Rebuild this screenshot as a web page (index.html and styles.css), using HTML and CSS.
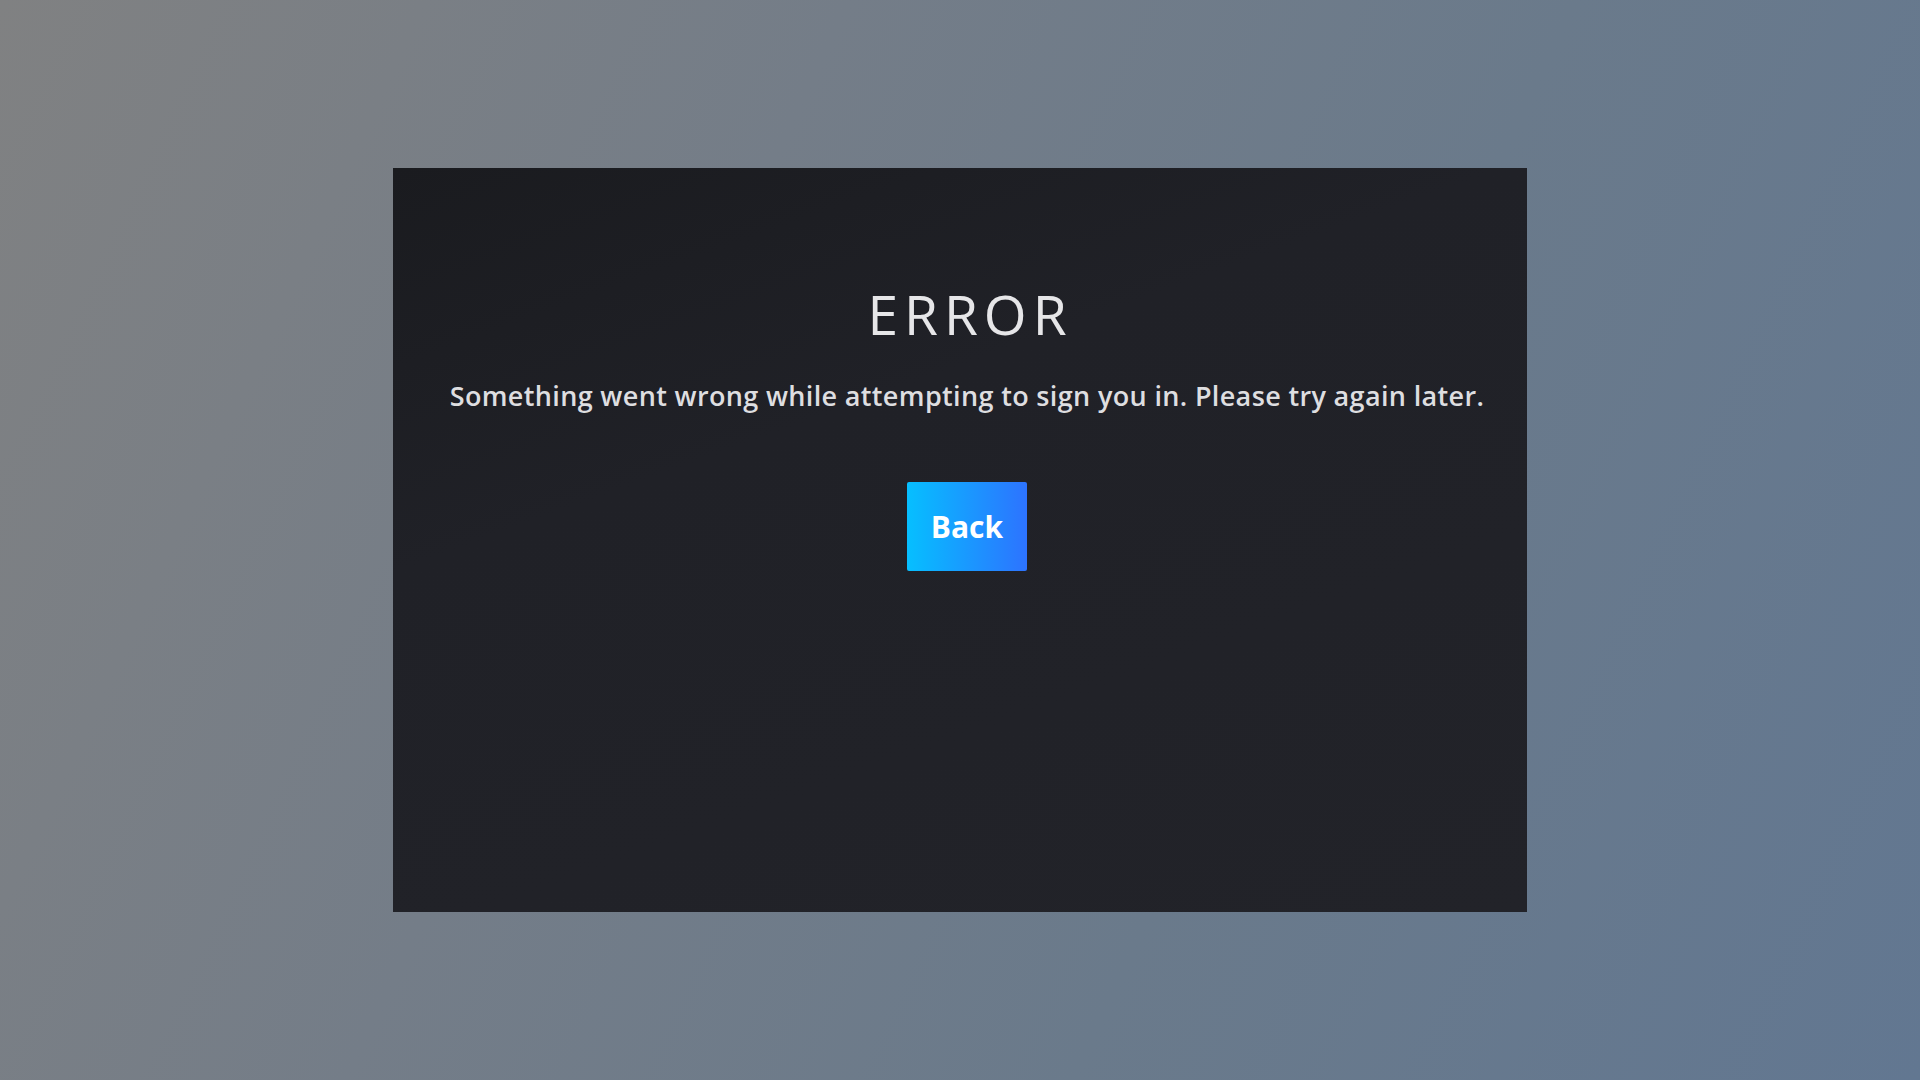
FILE: index.html
```html
<!DOCTYPE html>
<html lang="en">
<head>
<meta charset="utf-8">
<title>Error</title>
<link rel="stylesheet" href="styles.css">
</head>
<body>
<main class="stage">
  <section class="dialog">
    <h1 class="title">ERROR</h1>
    <p class="message">Something went wrong while attempting to sign you in. Please try again later.</p>
    <button class="back-btn" type="button">Back</button>
  </section>
</main>
</body>
</html>
```

FILE: styles.css
```css
html, body {
  margin: 0;
  padding: 0;
  width: 100%;
  height: 100%;
}

body {
  font-family: "Open Sans", "Noto Sans", Arial, sans-serif;
  background: linear-gradient(115deg, #808182 0%, #747d88 35%, #6a7a8b 65%, #627791 100%);
}

.stage {
  width: 1920px;
  height: 1080px;
  display: flex;
  align-items: center;
  justify-content: center;
}

.dialog {
  width: 1134px;
  height: 744px;
  box-sizing: border-box;
  padding-top: 119px;
  padding-left: 14px;
  display: flex;
  flex-direction: column;
  align-items: center;
  background: linear-gradient(160deg, #1a1b1f 0%, #202127 35%, #222329 100%);
}

.title {
  margin: 0 -6px 0 0;
  font-size: 55px;
  line-height: 54px;
  font-weight: 400;
  letter-spacing: 6px;
  color: #e6e6e8;
}

.message {
  margin: 41px 0 0;
  font-size: 27px;
  line-height: 27px;
  font-weight: 600;
  color: #dedee0;
  letter-spacing: 0.35px;
  white-space: nowrap;
}

.back-btn {
  margin-top: 73px;
  width: 120px;
  height: 89px;
  border: none;
  border-radius: 2px;
  padding: 0;
  background: linear-gradient(to right, #06bfff 0%, #2d73ff 100%);
  color: #ffffff;
  font-family: "Open Sans", "Noto Sans", Arial, sans-serif;
  font-size: 30px;
  font-weight: 700;
  line-height: 89px;
  cursor: pointer;
}
```
